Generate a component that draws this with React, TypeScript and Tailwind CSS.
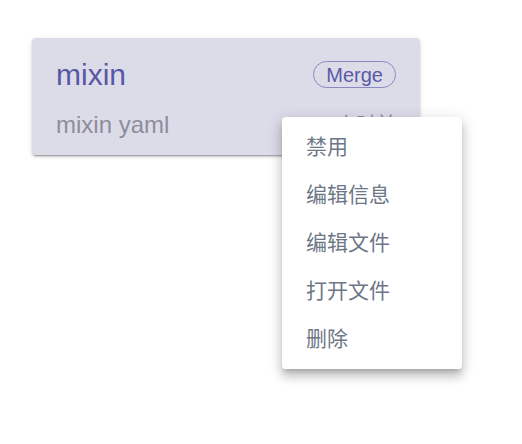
const menuItems = ['禁用', '编辑信息', '编辑文件', '打开文件', '删除'];

export default function App() {
    return (
        <div className="min-h-[444px] bg-white pl-[32px] pt-[38px] font-['Liberation_Sans','Noto_Sans_CJK_SC',sans-serif]">
            <div className="relative w-[388px]">
                {/* Card */}
                <div className="rounded-[4px] bg-[#dcdce9] px-6 pt-[23px] pb-4 shadow-[0_3px_1px_-2px_rgba(0,0,0,0.2),0_2px_2px_0_rgba(0,0,0,0.14),0_1px_5px_0_rgba(0,0,0,0.12)]">
                    <div className="flex h-[27px] items-center justify-between">
                        <span className="text-[30px] leading-none text-[#5857a5]">mixin</span>
                        <span className="flex h-[27px] items-center rounded-full border border-[#8a88c2] px-3 text-[20px] leading-none text-[#5a59a6]">Merge</span>
                    </div>
                    <div className="mt-[23px] flex h-7 items-center justify-between text-[#8d8d9b]">
                        <span className="text-[24px] leading-none">mixin yaml</span>
                        <span className="text-[20px] leading-none">1 小时前</span>
                    </div>
                </div>

                {/* Context menu */}
                <div className="absolute left-[250px] top-[79px] w-[180px] rounded-[4px] bg-white py-1.5 shadow-[0_5px_5px_-3px_rgba(0,0,0,0.2),0_8px_10px_1px_rgba(0,0,0,0.14),0_3px_14px_2px_rgba(0,0,0,0.12)]">
                    {menuItems.map((item) => (
                        <div key={item} className="flex h-12 items-center px-6 text-[21px] text-[#6d7786]">
                            {item}
                        </div>
                    ))}
                </div>
            </div>
        </div>
    );
}
